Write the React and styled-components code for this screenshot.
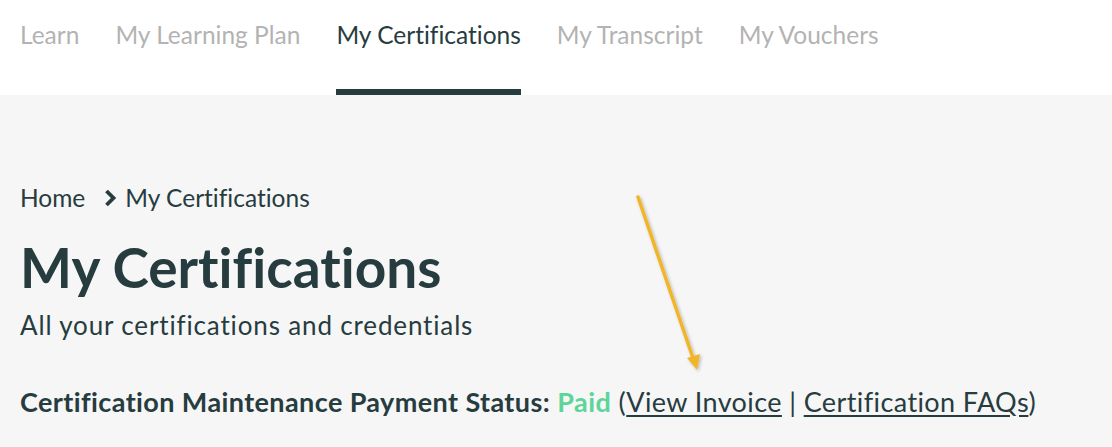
import React from 'react';
import styled, { createGlobalStyle } from 'styled-components';

const GlobalStyle = createGlobalStyle`
  html, body {
    margin: 0;
    padding: 0;
    background: #f6f6f6;
    font-family: Lato, "Liberation Sans", sans-serif;
    font-variant-ligatures: no-common-ligatures;
    color: #263c3f;
  }
`;

const tabs = ['Learn', 'My Learning Plan', 'My Certifications', 'My Transcript', 'My Vouchers'];

export default function App() {
  return (
    <Page>
      <GlobalStyle />
      <TabBar>
        {tabs.map((t) => (
          <Tab key={t} active={t === 'My Certifications'}>{t}</Tab>
        ))}
      </TabBar>
      <Content>
        <Breadcrumb>
          <span>Home</span>
          <Chevron viewBox="0 0 13 18">
            <path d="M2.5 2 L9.5 9 L2.5 16" fill="none" stroke="#263c3f" strokeWidth="3.8" />
          </Chevron>
          <span>My Certifications</span>
        </Breadcrumb>
        <Title>My Certifications</Title>
        <Subtitle>All your certifications and credentials</Subtitle>
        <Status>
          <b>Certification Maintenance Payment Status:</b> <Paid>Paid</Paid> (<Link href="#">View Invoice</Link> | <Link href="#">Certification FAQs</Link>)
        </Status>
        <Arrow viewBox="0 0 1112 447" width="1112" height="447">
          <defs>
            <filter id="sh" x="-20%" y="-20%" width="140%" height="140%">
              <feDropShadow dx="1.5" dy="1.5" stdDeviation="1.5" floodColor="#000" floodOpacity="0.25" />
            </filter>
          </defs>
          <g filter="url(#sh)">
            <line x1="638" y1="197" x2="693" y2="358" stroke="#f1b52a" strokeWidth="3.5" strokeLinecap="round" />
            <polygon points="687,358 700,354 697,370" fill="#f1b52a" />
          </g>
        </Arrow>
      </Content>
    </Page>
  );
}

const Page = styled.div`
  width: 1112px;
  min-height: 447px;
  background: #f6f6f6;
`;

const TabBar = styled.nav`
  display: flex;
  gap: 36px;
  height: 95px;
  padding-left: 20px;
  background: #ffffff;
  box-sizing: border-box;
`;

const Tab = styled.div`
  font-size: 24.5px;
  line-height: 1;
  padding-top: 23px;
  color: ${(p) => (p.active ? '#263c3f' : '#b3b3b3')};
  border-bottom: 6px solid ${(p) => (p.active ? '#263c3f' : 'transparent')};
  box-sizing: border-box;
  height: 95px;
`;

const Content = styled.main`
  position: relative;
  padding: 89px 20px 0;
  height: 352px;
  box-sizing: border-box;
`;

const Breadcrumb = styled.div`
  display: flex;
  align-items: center;
  font-size: 24.5px;
  line-height: 28px;
`;

const Chevron = styled.svg`
  width: 13px;
  height: 18px;
  margin: 0 8px 0 19px;
`;

const Title = styled.h1`
  font-size: 55px;
  font-weight: 700;
  margin: 23px 0 0;
  line-height: 64px;
`;

const Subtitle = styled.p`
  font-size: 26px;
  letter-spacing: 0.85px;
  margin: 11px 0 0;
  line-height: 30px;
`;

const Status = styled.p`
  font-size: 27px;
  letter-spacing: 0.4px;
  margin: 47px 0 0;
  line-height: 30px;
  b { font-weight: 700; }
`;

const Paid = styled.span`
  color: #5cd49a;
  font-weight: 700;
`;

const Link = styled.a`
  color: #263c3f;
  text-decoration: underline;
  text-underline-offset: 3px;
`;

const Arrow = styled.svg`
  position: absolute;
  left: 0;
  top: -95px;
  pointer-events: none;
`;
